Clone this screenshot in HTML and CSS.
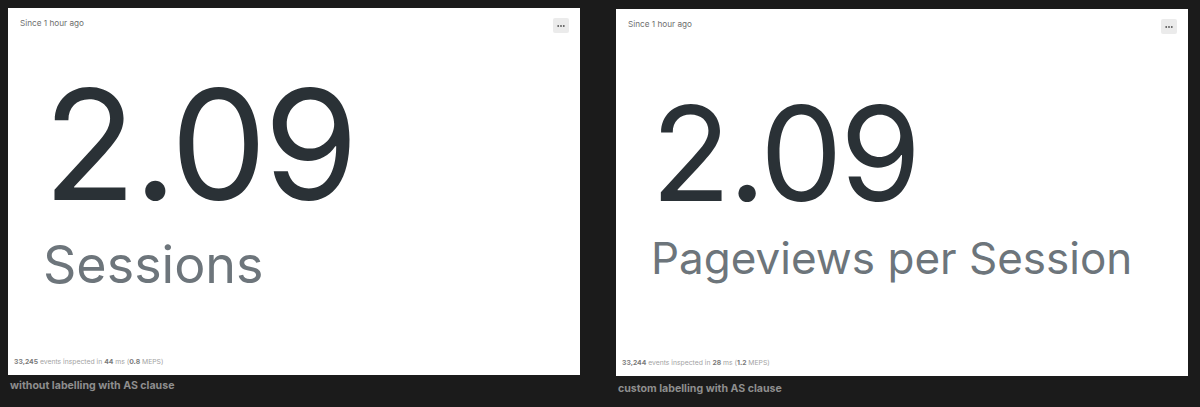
FILE: index.html
```html
<!DOCTYPE html>
<html>
<head>
<meta charset="utf-8">
<link rel="stylesheet" href="styles.css">
</head>
<body>
<div class="row">
  <div class="col">
    <div class="card">
      <div class="card-head">
        <span class="since">Since 1 hour ago</span>
        <button class="more" aria-label="More">
          <svg width="16" height="15" viewBox="0 0 16 15"><circle cx="5.2" cy="8" r="0.9" fill="#555"/><circle cx="8" cy="8" r="0.9" fill="#555"/><circle cx="10.8" cy="8" r="0.9" fill="#555"/></svg>
        </button>
      </div>
      <div class="card-body">
        <div class="value value-lg">2.09</div>
        <div class="label label-lg">Sessions</div>
      </div>
      <div class="card-foot"><b>33,245</b> events inspected in <b>44</b> ms (<b>0.8</b> MEPS)</div>
    </div>
    <div class="caption">without labelling with AS clause</div>
  </div>
  <div class="col col-right">
    <div class="card">
      <div class="card-head">
        <span class="since">Since 1 hour ago</span>
        <button class="more" aria-label="More">
          <svg width="16" height="15" viewBox="0 0 16 15"><circle cx="5.2" cy="8" r="0.9" fill="#555"/><circle cx="8" cy="8" r="0.9" fill="#555"/><circle cx="10.8" cy="8" r="0.9" fill="#555"/></svg>
        </button>
      </div>
      <div class="card-body card-body-md">
        <div class="value value-md">2.09</div>
        <div class="label label-md">Pageviews per Session</div>
      </div>
      <div class="card-foot"><b>33,244</b> events inspected in <b>28</b> ms (<b>1.2</b> MEPS)</div>
    </div>
    <div class="caption">custom labelling with AS clause</div>
  </div>
</div>
</body>
</html>
```

FILE: styles.css
```css
html, body {
  margin: 0;
  padding: 0;
  background: #1b1b1b;
  font-family: Inter, "Noto Sans", "Liberation Sans", sans-serif;
}
.row {
  display: flex;
  gap: 36px;
  padding: 8px 0 0 8px;
}
.col {
  width: 572px;
  display: flex;
  flex-direction: column;
}
.col-right {
  padding-top: 1px;
}
.card {
  height: 367px;
  background: #fff;
  box-sizing: border-box;
  display: flex;
  flex-direction: column;
  padding: 10px 11px 8px 12px;
}
.card-head {
  display: flex;
  justify-content: space-between;
  align-items: flex-start;
  height: 15px;
}
.since {
  font-size: 8.2px;
  line-height: 11px;
  color: #6e6e6e;
}
.more {
  width: 16px;
  height: 15px;
  padding: 0;
  border: 0;
  border-radius: 2px;
  background: #ebebeb;
  display: flex;
}
.card-body {
  flex: 1;
  display: flex;
  flex-direction: column;
  justify-content: center;
  padding-left: 23px;
  padding-bottom: 32px;
}
.card-body-md {
  padding-bottom: 24px;
}
.value {
  color: #2a3136;
  line-height: 1;
  letter-spacing: -0.02em;
}
.value-lg {
  font-size: 153px;
}
.value-md {
  font-size: 131px;
}
.label {
  color: #6d757b;
  line-height: 1;
}
.label-lg {
  font-size: 52px;
  margin-top: 18px;
}
.label-md {
  font-size: 44px;
  margin-top: 17px;
}
.card-foot {
  margin-left: -6px;
  font-size: 6.8px;
  line-height: 10px;
  color: #a3a3a3;
}
.card-foot b {
  color: #7a7a7a;
  font-weight: 700;
}
.caption {
  margin-top: 4px;
  padding-left: 2px;
  font-size: 10.6px;
  line-height: 14px;
  font-weight: 700;
  color: #8e8e8e;
}
.col-right .caption {
  margin-top: 6px;
}
```
